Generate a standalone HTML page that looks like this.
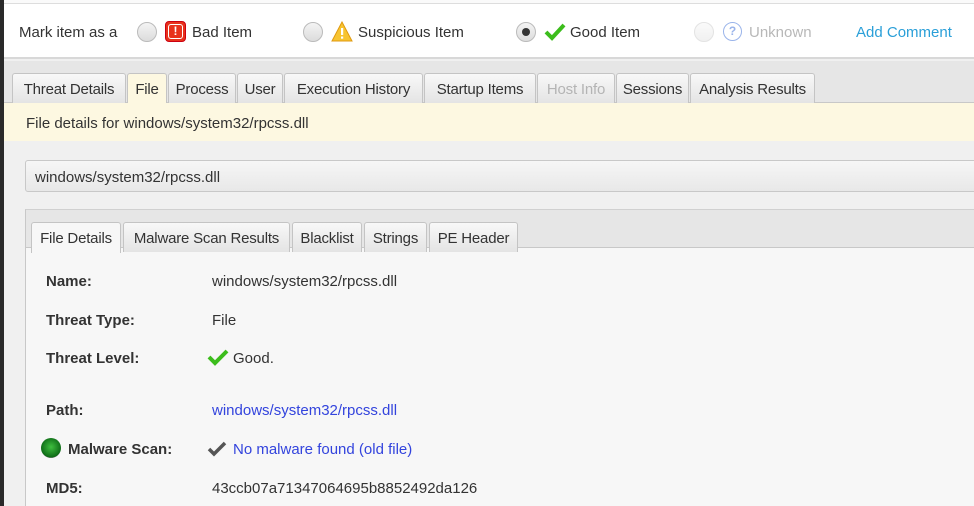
<!DOCTYPE html>
<html><head><style>
*{margin:0;padding:0;box-sizing:border-box}
html,body{width:974px;height:506px;overflow:hidden}
body{background:#f0f0f0;font-family:"Liberation Sans",sans-serif;font-size:15px;color:#333;position:relative}
.abs{position:absolute;white-space:nowrap}
.strip{left:0;top:0;width:4px;height:506px;background:#2a2a2a}
.top{left:4px;top:0;width:970px;height:59px;background:#fff;border-bottom:2px solid #d8d8d8}
.radio{width:20px;height:20px;border-radius:50%;border:1px solid #bbb;background:linear-gradient(#f4f4f4,#dcdcdc)}
.tabbar{left:4px;top:61px;width:970px;height:42px;background:#e6e6e6;border-bottom:1px solid #c8c8c8}
.tab{position:absolute;top:12px;height:30px;border:1px solid #c4c4c4;border-bottom:none;border-radius:3px 3px 0 0;background:linear-gradient(#f8f8f8,#e4e4e4);padding:7px 0 0;text-align:center;color:#333;letter-spacing:-0.2px}
.yellow{left:4px;top:103px;width:970px;height:38px;background:#fdf8e1;padding:12px 0 0 22px}
.field{left:25px;top:160px;width:960px;height:32px;border:1px solid #c8c8c8;border-radius:3px;background:linear-gradient(#f6f6f6,#e8e8e8);padding:8px 0 0 9px}
.inner{left:25px;top:209px;width:960px;height:297px;border-left:1px solid #c8c8c8;border-top:1px solid #d0d0d0;background:#f7f7f7}
.itabs{left:26px;top:210px;width:950px;height:38px;background:#e6e6e6;border-bottom:1px solid #c8c8c8}
.lbl{font-weight:bold;color:#333;left:46px}
.val{left:212px}
.link{color:#3344dd}
</style></head><body>
<div class="abs strip"></div>
<div class="abs top"></div>
<div class="abs" style="left:4px;top:0;width:970px;height:4px;border-bottom:1px solid #ddd;background:#fafafa"></div>
<div class="abs" style="left:19px;top:24px">Mark item as a</div>
<div class="abs radio" style="left:137px;top:22px"></div>
<div class="abs" style="left:165px;top:21px;width:21px;height:21px;background:#e8321c;border-radius:4px;border:1px solid #c01"><div style="position:absolute;left:2px;top:2px;width:15px;height:15px;border:1.5px solid #fff;border-radius:3px;color:#fff;font-weight:bold;font-size:12px;text-align:center;line-height:12px">!</div></div>
<div class="abs" style="left:192px;top:24px">Bad Item</div>
<div class="abs radio" style="left:303px;top:22px"></div>
<svg class="abs" style="left:331px;top:21px" width="22" height="21"><path d="M11 1L21 20H1Z" fill="#f7c431" stroke="#e09a10" stroke-width="1"/><rect x="10" y="7" width="2.2" height="7" fill="#fff"/><rect x="10" y="15.5" width="2.2" height="2.2" fill="#fff"/></svg>
<div class="abs" style="left:358px;top:24px">Suspicious Item</div>
<div class="abs radio" style="left:516px;top:22px"><div style="position:absolute;left:5px;top:5px;width:8px;height:8px;border-radius:50%;background:#333"></div></div>
<svg class="abs" style="left:544px;top:23px" width="22" height="18"><path d="M2 9L8 15L20 2" fill="none" stroke="#3cbd1c" stroke-width="4"/></svg>
<div class="abs" style="left:570px;top:24px">Good Item</div>
<div class="abs radio" style="left:694px;top:22px;opacity:.4"></div>
<div class="abs" style="left:723px;top:22px;width:19px;height:19px;border-radius:50%;border:1.5px solid #9ab4ea;color:#9ab4ea;font-size:12px;text-align:center;line-height:16px;font-weight:bold">?</div>
<div class="abs" style="left:749px;top:24px;color:#b8b8b8">Unknown</div>
<div class="abs" style="left:856px;top:24px;color:#2a9fd8">Add Comment</div>

<div class="abs tabbar">
<div class="tab" style="left:8px;width:114px">Threat Details</div>
<div class="tab" style="left:123px;width:40px;background:#fdf8e1;height:31px">File</div>
<div class="tab" style="left:164px;width:68px">Process</div>
<div class="tab" style="left:233px;width:46px">User</div>
<div class="tab" style="left:280px;width:139px">Execution History</div>
<div class="tab" style="left:420px;width:112px">Startup Items</div>
<div class="tab" style="left:533px;width:78px;color:#b4b4b4">Host Info</div>
<div class="tab" style="left:612px;width:73px">Sessions</div>
<div class="tab" style="left:686px;width:125px">Analysis Results</div>
</div>
<div class="abs yellow">File details for windows/system32/rpcss.dll</div>
<div class="abs field">windows/system32/rpcss.dll</div>
<div class="abs inner"></div>
<div class="abs itabs">
<div class="tab" style="left:5px;width:90px;background:#f7f7f7;height:31px">File Details</div>
<div class="tab" style="left:97px;width:167px">Malware Scan Results</div>
<div class="tab" style="left:266px;width:70px">Blacklist</div>
<div class="tab" style="left:338px;width:63px">Strings</div>
<div class="tab" style="left:403px;width:89px">PE Header</div>
</div>
<div class="abs lbl" style="top:273px">Name:</div><div class="abs val" style="top:273px">windows/system32/rpcss.dll</div>
<div class="abs lbl" style="top:312px">Threat Type:</div><div class="abs val" style="top:312px">File</div>
<div class="abs lbl" style="top:350px">Threat Level:</div>
<svg class="abs" style="left:207px;top:349px" width="22" height="17"><path d="M2 8L8 14L20 2" fill="none" stroke="#3cbd1c" stroke-width="4"/></svg>
<div class="abs val" style="top:350px;left:233px">Good.</div>
<div class="abs lbl" style="top:402px">Path:</div><div class="abs val link" style="top:402px">windows/system32/rpcss.dll</div>
<div class="abs" style="left:41px;top:438px;width:20px;height:20px;border-radius:50%;background:radial-gradient(circle at 50% 45%,#3fbf3f,#0d6a16 70%,#777 72%,#ccc)"></div>
<div class="abs lbl" style="top:441px;left:68px">Malware Scan:</div>
<svg class="abs" style="left:207px;top:441px" width="20" height="16"><path d="M2 8L7 13L18 2" fill="none" stroke="#555" stroke-width="3.5"/></svg>
<div class="abs val link" style="top:441px;left:233px">No malware found (old file)</div>
<div class="abs lbl" style="top:480px">MD5:</div><div class="abs val" style="top:480px">43ccb07a71347064695b8852492da126</div>
</body></html>
